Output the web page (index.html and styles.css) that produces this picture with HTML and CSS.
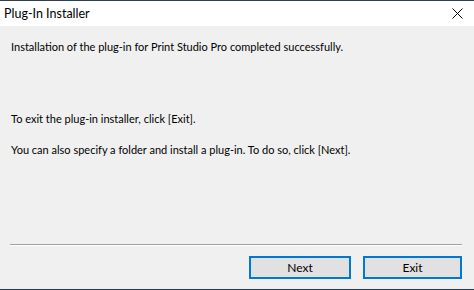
FILE: index.html
```html
<!DOCTYPE html>
<html lang="en">
<head>
    <meta charset="UTF-8">
    <title>Plug-In Installer</title>
    <link rel="stylesheet" href="styles.css">
</head>
<body>
    <div class="window">
        <!-- Barra del titolo -->
        <header class="title-bar">
            <span class="title">Plug-In Installer</span>
            <span class="close">
                <svg width="11" height="11" viewBox="0 0 11 11">
                    <path d="M0.5 0.5 L10.5 10.5 M10.5 0.5 L0.5 10.5" stroke="#000" stroke-width="1" fill="none"/>
                </svg>
            </span>
        </header>

        <!-- Contenuto -->
        <main class="content">
            <p class="msg msg-done">Installation of the plug-in for Print Studio Pro completed successfully.</p>
            <p class="msg msg-exit">To exit the plug-in installer, click [Exit].</p>
            <p class="msg msg-next">You can also specify a folder and install a plug-in. To do so, click [Next].</p>
        </main>

        <!-- Pulsanti -->
        <footer class="actions">
            <hr class="separator">
            <div class="buttons">
                <button class="btn btn-next">Next</button>
                <button class="btn btn-exit">Exit</button>
            </div>
        </footer>
    </div>
</body>
</html>
```

FILE: styles.css
```css
:root {
    --body-bg: #f0f0f0;
    --frame: #2b3f52;
    --button-bg: #e1e1e1;
    --button-border: #0078d7;
    --font-family: Lato, "Noto Sans", sans-serif;
}

* {
    margin: 0;
    padding: 0;
    box-sizing: border-box;
}

body {
    width: 474px;
    height: 290px;
    overflow: hidden;
    font-family: var(--font-family);
    font-size: 11px;
    color: #000;
    background-color: var(--body-bg);
}

.window {
    display: flex;
    flex-direction: column;
    height: 290px;
    border-top: 1px solid var(--frame);
    border-bottom: 1px solid var(--frame);
}

.title-bar {
    display: flex;
    justify-content: space-between;
    align-items: center;
    height: 25px;
    background-color: #fff;
    padding-left: 4px;
}

.title {
    font-size: 12.5px;
    line-height: 16px;
}

.close {
    display: flex;
    align-items: center;
    justify-content: center;
    width: 32px;
    height: 25px;
    margin-right: 1px;
}

.content {
    flex: 1;
    padding: 13px 11px 0;
}

.msg {
    line-height: 16px;
}

.msg-exit {
    margin-top: 56px;
}

.msg-next {
    margin-top: 15px;
}

.actions {
    padding: 0 12px 10px 10px;
}

.separator {
    border: none;
    border-top: 1px solid #a0a0a0;
    border-bottom: 1px solid #fff;
    margin-bottom: 10px;
}

.buttons {
    display: flex;
    justify-content: flex-end;
    gap: 12px;
}

.btn {
    width: 102px;
    height: 23px;
    font-family: var(--font-family);
    font-size: 12px;
    background-color: var(--button-bg);
    border: 2px solid var(--button-border);
    color: #000;
}

.btn-exit {
    width: 99px;
}
```
